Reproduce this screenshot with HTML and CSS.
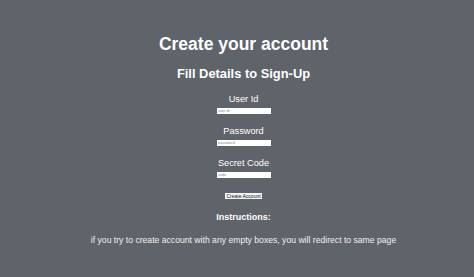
FILE: index.html
```html
<!DOCTYPE html>
<html>
<head>
<meta charset="utf-8">
<link rel="stylesheet" href="styles.css">
</head>
<body>
<main class="page">
  <h1 class="title">Create your account</h1>
  <h2 class="subtitle">Fill Details to Sign-Up</h2>
  <form class="form">
    <label class="field">
      <span class="label">User Id</span>
      <input class="input" type="text" placeholder="user id">
    </label>
    <label class="field">
      <span class="label">Password</span>
      <input class="input" type="password" placeholder="password">
    </label>
    <label class="field">
      <span class="label">Secret Code</span>
      <input class="input" type="text" placeholder="code">
    </label>
    <button class="btn" type="button">Create Account</button>
  </form>
  <h3 class="instr-title">Instructions:</h3>
  <p class="instr">if you try to create account with any empty boxes, you will redirect to same page</p>
</main>
</body>
</html>
```
FILE: styles.css
```css
html, body {
  margin: 0;
  padding: 0;
  background: #5f636a;
}
body {
  width: 474px;
  height: 277px;
  overflow: hidden;
  font-family: "Liberation Sans", Arial, sans-serif;
  color: #ffffff;
}
.page {
  display: flex;
  flex-direction: column;
  align-items: center;
  padding-top: 32px;
  padding-left: 13px;
}
.title {
  margin: 0;
  font-size: 17.5px;
  font-weight: 700;
  line-height: 24px;
}
.subtitle {
  margin: 9px 0 0 0;
  font-size: 12.9px;
  font-weight: 700;
  line-height: 18px;
}
.form {
  display: flex;
  flex-direction: column;
  align-items: center;
  margin-top: 10px;
}
.field {
  display: flex;
  flex-direction: column;
  align-items: center;
  margin-bottom: 11px;
}
.label {
  font-size: 9.2px;
  line-height: 12px;
  margin-bottom: 3px;
}
.input {
  box-sizing: border-box;
  width: 54px;
  height: 6px;
  padding: 0 1px;
  margin: 0;
  border: 0;
  background: #ffffff;
  font-family: "Liberation Sans", Arial, sans-serif;
  font-size: 4px;
  line-height: 6px;
  color: #333;
  outline: none;
}
.input::placeholder {
  color: #888;
}
.btn {
  margin-top: 4px;
  padding: 0 1px;
  height: 6px;
  border: 0;
  border-radius: 0;
  background: #f4f4f4;
  color: #111;
  font-family: "Liberation Sans", Arial, sans-serif;
  font-size: 5px;
  line-height: 6px;
}
.instr-title {
  margin: 11px 0 0 0;
  font-size: 9px;
  font-weight: 700;
  line-height: 14px;
}
.instr {
  margin: 10px 0 0 0;
  font-size: 8.65px;
  line-height: 12px;
  color: #f0f0f0;
}
```
